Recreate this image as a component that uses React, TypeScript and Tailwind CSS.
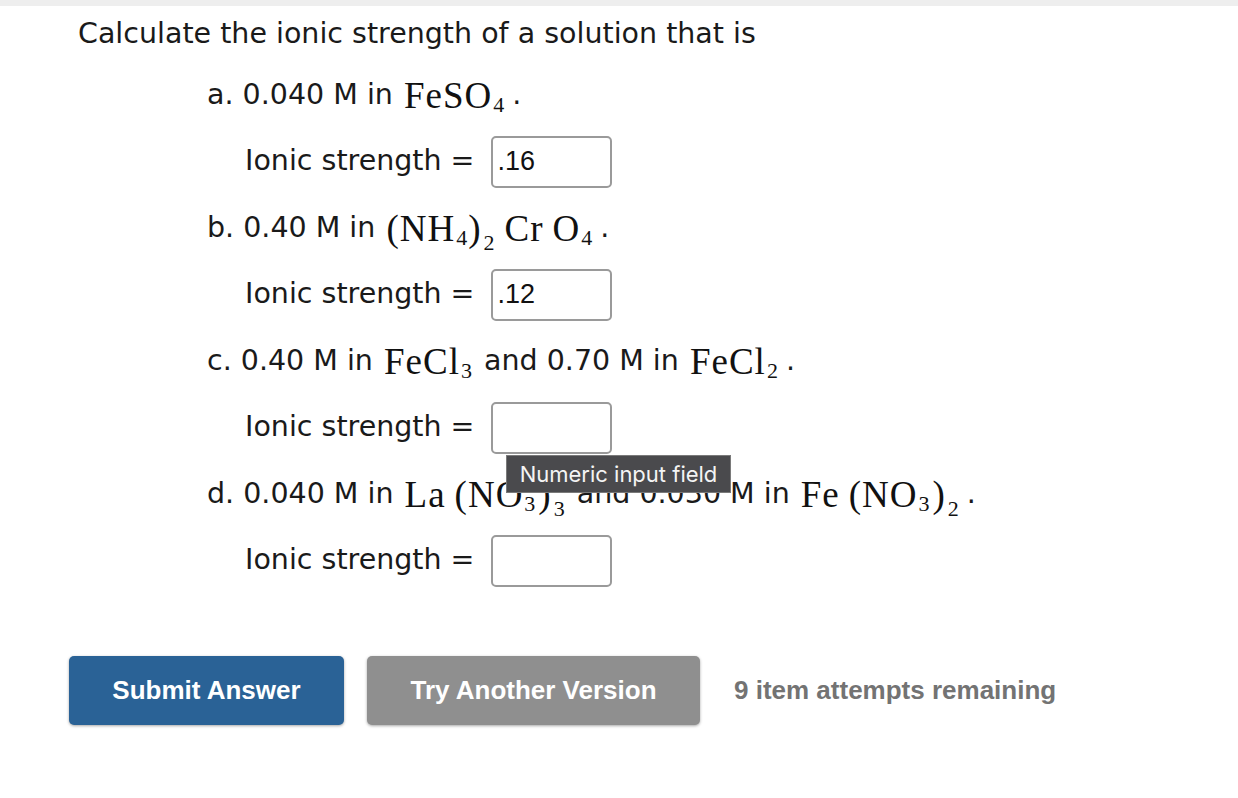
import React from 'react'

const serif = { fontFamily: '"Liberation Serif", "DejaVu Serif", serif' }

function M({ children }: { children: React.ReactNode }) {
  return <span className="text-[37px] leading-none tracking-[1px] text-[#111] mx-[2px]" style={serif}>{children}</span>
}

// subscript digit; low = the one that hangs off a closing paren
function Sub({ children, low = false }: { children: React.ReactNode; low?: boolean }) {
  return <span className={low ? 'text-[22px] relative top-[9px] ml-[2px]' : 'text-[22px] relative top-[4px] ml-[1px]'}>{children}</span>
}

function Gap() {
  return <span className="inline-block w-[9px]" />
}

function AnswerRow({ value }: { value: string }) {
  return (
    <div className="h-[67px] flex items-center pl-[245px]">
      <span>Ionic strength</span>
      <span className="ml-[9px]">=</span>
      <div className="ml-[17px] w-[121px] h-[52px] border-2 border-[#9a9a9a] rounded-[5px] flex items-center px-[4px] text-[27px] text-[#111]" style={{ fontFamily: '"Liberation Sans", Arial, sans-serif' }}>
        {value}
      </div>
    </div>
  )
}

function PartRow({ children }: { children: React.ReactNode }) {
  return <div className="h-[66px] flex items-center pl-[207px] whitespace-nowrap">{children}</div>
}

function Dot() {
  return <span className="ml-[5px]">.</span>
}

export default function App() {
  return (
    <div className="w-[1238px] h-[798px] bg-white overflow-hidden text-[#1a1a1a] text-[28.5px]" style={{ fontFamily: '"DejaVu Sans", Verdana, sans-serif' }}>
      <div className="h-[6px] bg-[#eeeeee]" />

      <div className="h-[56px] flex items-center pl-[78px]">Calculate the ionic strength of a solution that is</div>

      <PartRow>
        <span>a. 0.040 M in&nbsp;</span>
        <M>FeSO<Sub>4</Sub></M>
        <Dot />
      </PartRow>
      <AnswerRow value=".16" />

      <PartRow>
        <span>b. 0.40 M in&nbsp;</span>
        <M>
          (NH<Sub>4</Sub>)<Sub low>2</Sub><Gap />Cr<Gap />O<Sub>4</Sub>
        </M>
        <Dot />
      </PartRow>
      <AnswerRow value=".12" />

      <PartRow>
        <span>c. 0.40 M in&nbsp;</span>
        <M>FeCl<Sub>3</Sub></M>
        <span>&nbsp;and 0.70 M in&nbsp;</span>
        <M>FeCl<Sub>2</Sub></M>
        <Dot />
      </PartRow>
      <AnswerRow value="" />

      <div className="relative">
        <PartRow>
          <span>d. 0.040 M in&nbsp;</span>
          <M>La<Gap />(NO<Sub>3</Sub><span className="ml-[2px]">)</span><Sub low>3</Sub></M>
          <span>&nbsp;and 0.030 M in&nbsp;</span>
          <M>Fe<Gap />(NO<Sub>3</Sub><span className="ml-[2px]">)</span><Sub low>2</Sub></M>
          <Dot />
        </PartRow>
        <div className="absolute left-[506px] top-[-6px] h-[38px] w-[225px] bg-[#4a4a4d] border border-[#7a7a7a] text-[#f4f4f4] text-[22px] flex items-center justify-center" style={{ fontFamily: 'Inter, "Liberation Sans", sans-serif' }}>
          Numeric input field
        </div>
      </div>
      <AnswerRow value="" />

      <div className="flex items-center pl-[69px] mt-[62px]" style={{ fontFamily: '"Liberation Sans", Arial, sans-serif' }}>
        <button className="w-[275px] h-[69px] rounded-[5px] bg-[#2a6296] text-white font-bold text-[26px] shadow-[0_1px_3px_rgba(0,0,0,0.35)]">
          Submit Answer
        </button>
        <button className="ml-[23px] w-[333px] h-[69px] rounded-[5px] bg-[#8f8f8f] text-white font-bold text-[26px] shadow-[0_1px_3px_rgba(0,0,0,0.35)]">
          Try Another Version
        </button>
        <span className="ml-[34px] text-[#737373] font-bold text-[26px]">9 item attempts remaining</span>
      </div>
    </div>
  )
}
